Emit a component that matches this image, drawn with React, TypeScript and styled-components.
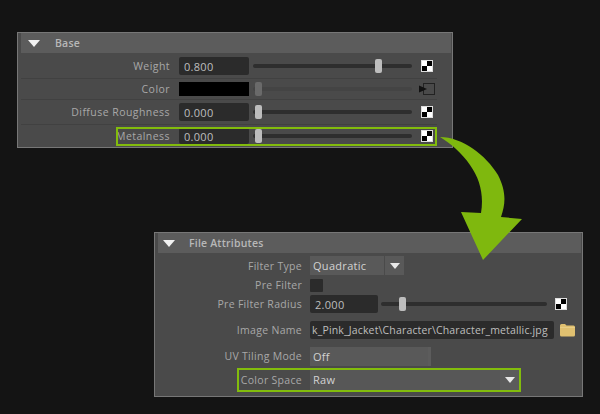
import React from "react";
import styled, { createGlobalStyle } from "styled-components";

const GlobalStyle = createGlobalStyle`
  html, body {
    margin: 0;
    padding: 0;
    background: #141414;
  }
  body {
    width: 600px;
    height: 414px;
    overflow: hidden;
    font-family: "Open Sans", "Liberation Sans", sans-serif;
  }
`;

const Page = styled.div`
  position: relative;
  width: 600px;
  height: 414px;
  padding-top: 32px;
  box-sizing: border-box;
`;

const Panel = styled.section<{ $left: number; $width: number; $top?: number; $height: number }>`
  position: relative;
  box-sizing: border-box;
  width: ${(p) => p.$width}px;
  height: ${(p) => p.$height}px;
  margin: ${(p) => p.$top ?? 0}px 0 0 ${(p) => p.$left}px;
  background: #4a4a4a;
  border: 1px solid #777;
  padding: 0 1px 0 3px;
`;

const Header = styled.header<{ $height: number }>`
  display: flex;
  align-items: center;
  height: ${(p) => p.$height}px;
  background: #5c5c5c;
  color: #b8b8b8;
  font-size: 10.5px;
  font-weight: 600;
  letter-spacing: 0.2px;
  margin-bottom: 1px;
`;

const Caret = styled.svg<{ $start: number; $gap: number }>`
  width: 12px;
  height: 7px;
  margin: 0 ${(p) => p.$gap}px 0 ${(p) => p.$start}px;
  flex: none;
`;

const Row = styled.div<{ $height: number; $labelWidth: number; $gap?: number; $line?: boolean }>`
  display: grid;
  grid-template-columns: ${(p) => p.$labelWidth}px 1fr;
  column-gap: ${(p) => p.$gap ?? 9}px;
  align-items: center;
  height: ${(p) => p.$height}px;
  box-sizing: border-box;
  border-bottom: 1px solid ${(p) => (p.$line ? "#414141" : "transparent")};
  margin-right: 14px;
`;

const Label = styled.span<{ $spacing?: number }>`
  text-align: right;
  font-size: 10.5px;
  letter-spacing: ${(p) => p.$spacing ?? 0.45}px;
  color: #a8a8a8;
  white-space: nowrap;
`;

const Controls = styled.div`
  display: flex;
  align-items: center;
  min-width: 0;
`;

const Field = styled.div<{ $width: number; $height?: number }>`
  box-sizing: border-box;
  flex: none;
  width: ${(p) => p.$width}px;
  height: ${(p) => p.$height ?? 18}px;
  padding: 1px 3px 0 5px;
  background: #2b2b2b;
  border-radius: 2px;
  color: #bebebe;
  font-size: 11px;
  letter-spacing: 0.3px;
  line-height: ${(p) => (p.$height ?? 18) - 1}px;
  white-space: nowrap;
`;

const PathField = styled(Field)`
  padding-left: 2px;
  font-size: 10.5px;
  letter-spacing: 0.16px;
`;

const Swatch = styled.div`
  flex: none;
  width: 70px;
  height: 14px;
  background: #000;
`;

const Track = styled.div<{ $width: number; $left: number; $dim?: boolean }>`
  position: relative;
  flex: none;
  width: ${(p) => p.$width}px;
  height: 4px;
  margin-left: ${(p) => p.$left}px;
  border-radius: 2px;
  background: ${(p) => (p.$dim ? "#444" : "#2e2e2e")};
`;

const Thumb = styled.div<{ $at: number; $dim?: boolean }>`
  position: absolute;
  left: ${(p) => p.$at}px;
  top: -5px;
  width: 7px;
  height: 14px;
  border-radius: 2px;
  background: ${(p) => (p.$dim ? "#6a6a6a" : "#bdbdbd")};
`;

const CheckerBox = styled.svg<{ $left: number }>`
  flex: none;
  width: 12px;
  height: 12px;
  margin-left: ${(p) => p.$left}px;
`;

const ConnectBox = styled.svg`
  flex: none;
  width: 17px;
  height: 14px;
  margin-left: 7px;
`;

const Select = styled.div<{ $width: number; $height: number; $bg?: string }>`
  display: flex;
  align-items: center;
  box-sizing: border-box;
  flex: none;
  width: ${(p) => p.$width}px;
  height: ${(p) => p.$height}px;
  padding-left: 3px;
  background: ${(p) => p.$bg ?? "#595959"};
  color: #d2d2d2;
  font-size: 11px;
  letter-spacing: 0.3px;
`;

const SelectButton = styled.div<{ $width: number; $height: number; $gap: number; $bg?: string }>`
  display: flex;
  align-items: center;
  justify-content: center;
  flex: none;
  width: ${(p) => p.$width}px;
  height: ${(p) => p.$height}px;
  margin-left: ${(p) => p.$gap}px;
  background: ${(p) => p.$bg ?? "#595959"};
`;

const MiniCaret = styled.svg`
  width: 10px;
  height: 6px;
`;

const Tick = styled.div`
  width: 3px;
  height: 19px;
  background: #5c5c5c;
  flex: none;
`;

const CheckBoxEmpty = styled.div`
  width: 13px;
  height: 13px;
  background: #2b2b2b;
  border-radius: 1px;
`;

const FolderIcon = styled.svg`
  flex: none;
  width: 17px;
  height: 14px;
  margin-left: 5px;
`;

const Highlight = styled.div<{ $x: number; $y: number; $w: number; $h: number }>`
  position: absolute;
  left: ${(p) => p.$x}px;
  top: ${(p) => p.$y}px;
  width: ${(p) => p.$w}px;
  height: ${(p) => p.$h}px;
  box-sizing: border-box;
  border: 2px solid #82bc0c;
  pointer-events: none;
`;

const CurvedArrow = styled.svg`
  position: absolute;
  left: 430px;
  top: 125px;
  width: 110px;
  height: 140px;
`;

const HeaderCaret = ({ start, gap }: { start: number; gap: number }) => (
  <Caret $start={start} $gap={gap} viewBox="0 0 12 7">
    <path d="M0 0H12L6 7Z" fill="#f2f2f2" />
  </Caret>
);

const Checker = ({ left }: { left: number }) => (
  <CheckerBox $left={left} viewBox="0 0 12 12">
    <rect width="12" height="12" fill="#ddd" />
    <rect x="1" y="1" width="5" height="5" fill="#fff" />
    <rect x="6" y="1" width="5" height="5" fill="#000" />
    <rect x="1" y="6" width="5" height="5" fill="#000" />
    <rect x="6" y="6" width="5" height="5" fill="#fff" />
  </CheckerBox>
);

const DownCaret = () => (
  <MiniCaret viewBox="0 0 10 6">
    <path d="M0 0H10L5 6Z" fill="#e8e8e8" />
  </MiniCaret>
);

export default function App() {
  return (
    <Page>
      <GlobalStyle />

      <Panel $left={17} $width={436} $height={116}>
        <Header $height={20}>
          <HeaderCaret start={7} gap={15} />
          Base
        </Header>
        <Row $height={25} $labelWidth={149} $line>
          <Label>Weight</Label>
          <Controls>
            <Field $width={70}>0.800</Field>
            <Track $width={159} $left={4}>
              <Thumb $at={122} />
            </Track>
            <Checker left={9} />
          </Controls>
        </Row>
        <Row $height={21} $labelWidth={149} $line>
          <Label>Color</Label>
          <Controls>
            <Swatch />
            <Track $width={159} $left={4} $dim>
              <Thumb $at={2} $dim />
            </Track>
            <ConnectBox viewBox="0 0 17 14">
              <rect x="4.5" y="1.5" width="11" height="11" fill="none" stroke="#222" />
              <path d="M0 3.5L8 7L0 10.5Z" fill="#111" />
            </ConnectBox>
          </Controls>
        </Row>
        <Row $height={25} $labelWidth={149} $line>
          <Label>Diffuse Roughness</Label>
          <Controls>
            <Field $width={70}>0.000</Field>
            <Track $width={159} $left={4}>
              <Thumb $at={2} />
            </Track>
            <Checker left={9} />
          </Controls>
        </Row>
        <Row $height={23} $labelWidth={149}>
          <Label>Metalness</Label>
          <Controls>
            <Field $width={70} $height={16}>0.000</Field>
            <Track $width={159} $left={4}>
              <Thumb $at={2} />
            </Track>
            <Checker left={9} />
          </Controls>
        </Row>
        <Highlight $x={98} $y={94} $w={321} $h={19} />
      </Panel>

      <Panel $left={154} $width={429} $height={165} $top={84}>
        <Header $height={20}>
          <HeaderCaret start={5} gap={14} />
          File Attributes
        </Header>
        <Row $height={24} $labelWidth={144} $gap={8}>
          <Label $spacing={0.3}>Filter Type</Label>
          <Controls>
            <Select $width={74} $height={19}>Quadratic</Select>
            <SelectButton $width={19} $height={19} $gap={1}>
              <DownCaret />
            </SelectButton>
          </Controls>
        </Row>
        <Row $height={15} $labelWidth={144} $gap={8}>
          <Label $spacing={0.3}>Pre Filter</Label>
          <Controls>
            <CheckBoxEmpty />
          </Controls>
        </Row>
        <Row $height={22} $labelWidth={144} $gap={8}>
          <Label $spacing={0.3}>Pre Filter Radius</Label>
          <Controls>
            <Field $width={68}>2.000</Field>
            <Track $width={166} $left={3}>
              <Thumb $at={18} />
            </Track>
            <Checker left={8} />
          </Controls>
        </Row>
        <Row $height={30} $labelWidth={144} $gap={8}>
          <Label $spacing={0.3}>Image Name</Label>
          <Controls>
            <PathField $width={244}>k_Pink_Jacket\Character\Character_metallic.jpg</PathField>
            <FolderIcon viewBox="0 0 17 14">
              <path d="M1 2.5Q1 1 2.5 1H6L7.5 2.5H14.5Q16 2.5 16 4V12Q16 13.5 14.5 13.5H2.5Q1 13.5 1 12Z" fill="#e0c070" />
              <path d="M1 4.5H16V5H1Z" fill="#f0dc9c" />
            </FolderIcon>
          </Controls>
        </Row>
        <Row $height={23} $labelWidth={144} $gap={8}>
          <Label $spacing={0.3}>UV Tiling Mode</Label>
          <Controls>
            <Select $width={118} $height={19}>Off</Select>
            <Tick />
          </Controls>
        </Row>
        <Row $height={24} $labelWidth={144} $gap={8}>
          <Label $spacing={0.3}>Color Space</Label>
          <Controls>
            <Select $width={190} $height={20} $bg="#575757">Raw</Select>
            <SelectButton $width={19} $height={20} $gap={0} $bg="#5b5b5b">
              <DownCaret />
            </SelectButton>
          </Controls>
        </Row>
        <Highlight $x={82} $y={135} $w={284} $h={24} />
      </Panel>

      <CurvedArrow viewBox="0 0 110 140">
        <path
          d="M10 12C32 12 56 30 68 50C76 66 76 78 71 92L92 94L53 135L31 87L51 88C54 70 50 54 40 40C32 28 20 18 10 12Z"
          fill="#7fb80e"
        />
      </CurvedArrow>
    </Page>
  );
}
